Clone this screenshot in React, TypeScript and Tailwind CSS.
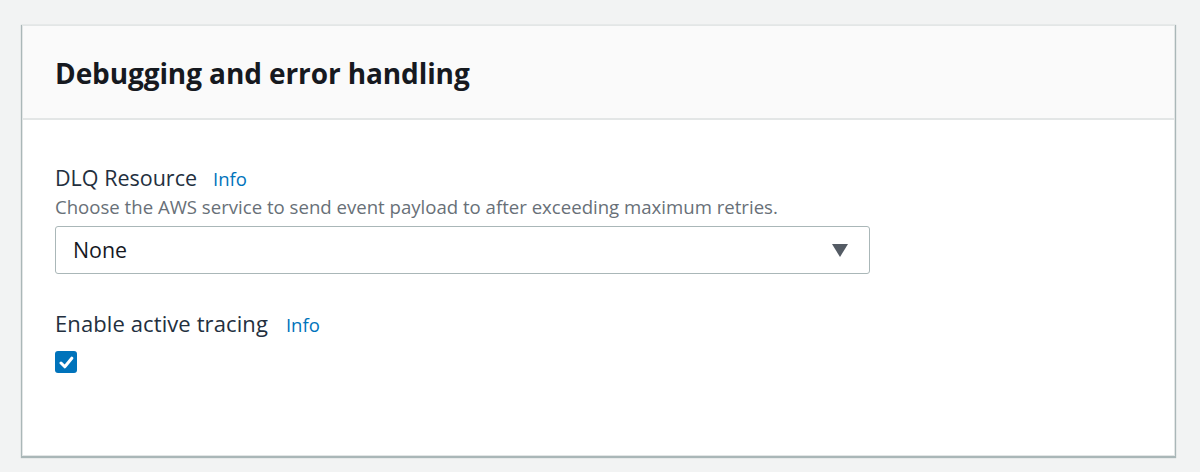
export default function App() {
  return (
    <div
      className="w-[1200px] h-[472px] bg-[#f2f3f3] pt-[25px] pl-[22px]"
      style={{ fontFamily: '"Open Sans", "Liberation Sans", sans-serif' }}
    >
      <section className="w-[1153px] h-[431px] bg-white border border-[#e3e6e6] shadow-[0_1px_1px_1px_#aab7b8] flex flex-col">
        <header className="h-[94px] bg-[#fafafa] border-b-2 border-[#e3e6e6] flex items-center px-[32px] pt-[2px]">
          <h2 className="text-[28px] leading-[34px] font-bold text-[#16191f] tracking-[-0.1px]">
            Debugging and error handling
          </h2>
        </header>

        <div className="px-[32px] pt-[45px]">
          <div className="flex items-baseline gap-[16px] h-[26px]">
            <label className="text-[21.5px] leading-[26px] text-[#232f3e]">DLQ Resource</label>
            <span className="text-[18.5px] leading-[26px] text-[#0073bb] font-medium">Info</span>
          </div>
          <p className="mt-[5px] text-[18.6px] text-[#687078] leading-[22px]">
            Choose the AWS service to send event payload to after exceeding maximum retries.
          </p>
          <div className="mt-[8px] w-[815px] h-[48px] border border-[#aab7b8] rounded-[3px] flex items-center justify-between pl-[17px] pr-[21px]">
            <span className="text-[21.4px] text-[#16191f]">None</span>
            <svg width="16" height="13" viewBox="0 0 16 13">
              <polygon points="0,0 16,0 8,13" fill="#545b64" />
            </svg>
          </div>

          <div className="flex items-baseline gap-[18px] mt-[36px] h-[26px]">
            <label className="text-[22px] leading-[26px] text-[#232f3e] tracking-[0.1px]">Enable active tracing</label>
            <span className="text-[18.5px] leading-[26px] text-[#0073bb] font-medium">Info</span>
          </div>
          <div className="mt-[15px] w-[22px] h-[22px] rounded-[3px] bg-[#0073bb] flex items-center justify-center">
            <svg width="15" height="13" viewBox="0 0 15 13">
              <path d="M2 7 L5.8 10.8 L12.8 2.2" fill="none" stroke="white" strokeWidth="3" strokeLinecap="round" strokeLinejoin="round" />
            </svg>
          </div>
        </div>
      </section>
    </div>
  );
}
